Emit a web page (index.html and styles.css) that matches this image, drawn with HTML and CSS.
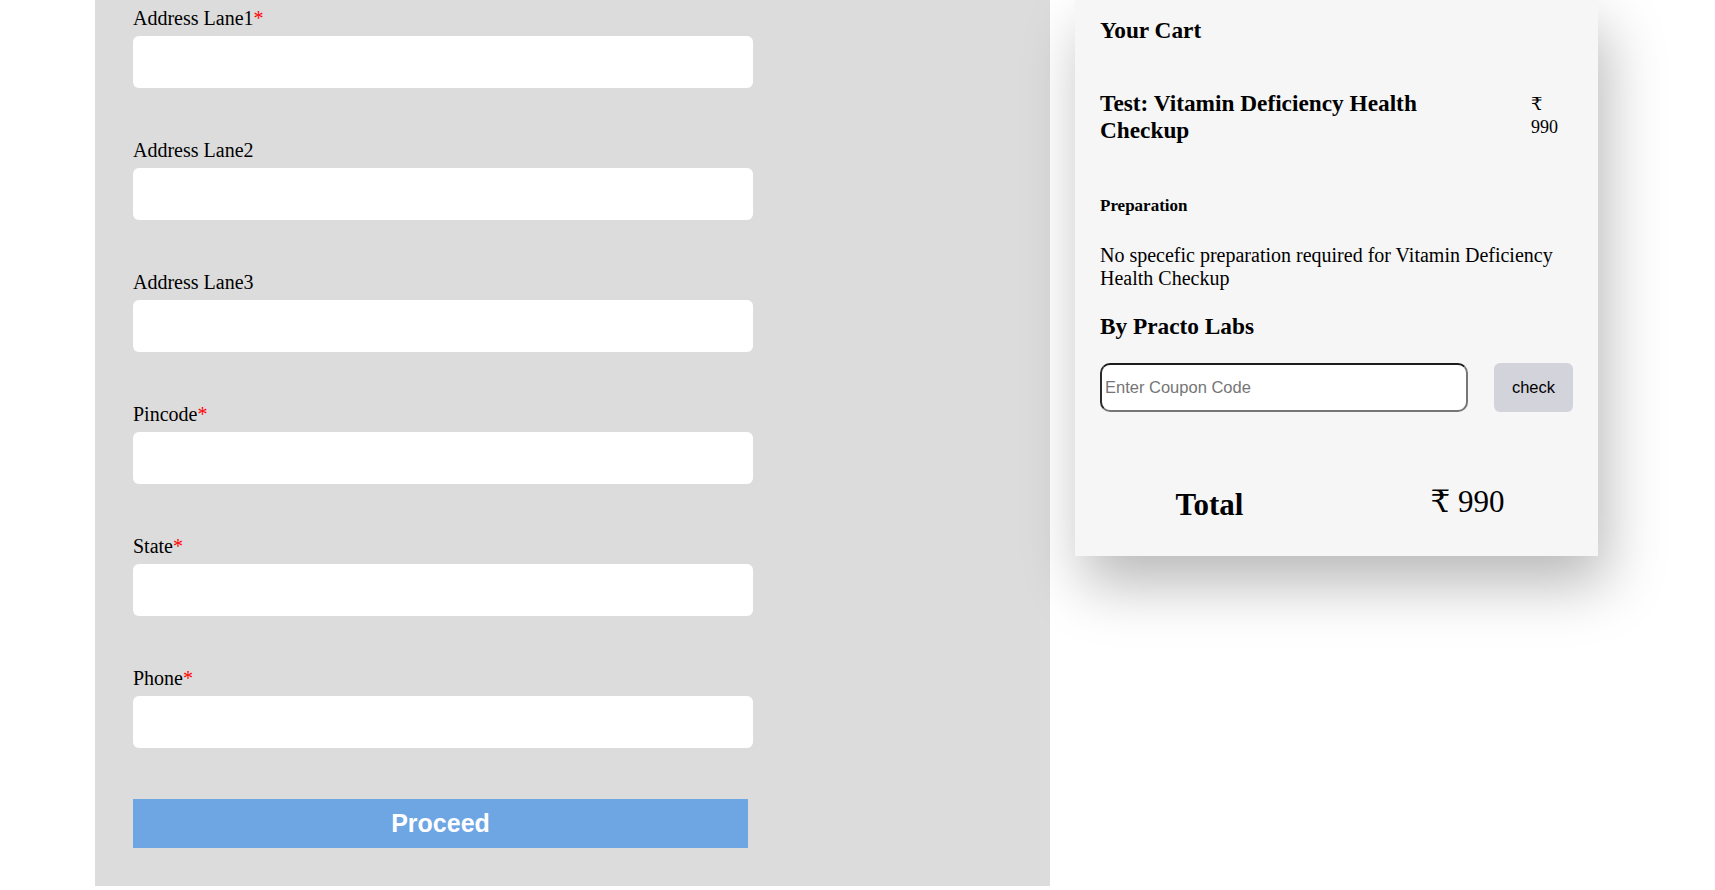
FILE: index.html
```html
<!DOCTYPE html>
<html lang="en">
<head>
<meta charset="utf-8">
<title>Checkout</title>
<link rel="stylesheet" href="styles.css">
</head>
<body>
<div class="page">
  <form class="address-panel">
    <div class="field">
      <label class="field-label">Address Lane1<span class="req">*</span></label>
      <input class="field-input" type="text">
    </div>
    <div class="field">
      <label class="field-label">Address Lane2</label>
      <input class="field-input" type="text">
    </div>
    <div class="field">
      <label class="field-label">Address Lane3</label>
      <input class="field-input" type="text">
    </div>
    <div class="field">
      <label class="field-label">Pincode<span class="req">*</span></label>
      <input class="field-input" type="text">
    </div>
    <div class="field">
      <label class="field-label">State<span class="req">*</span></label>
      <input class="field-input" type="text">
    </div>
    <div class="field">
      <label class="field-label">Phone<span class="req">*</span></label>
      <input class="field-input" type="text">
    </div>
    <button class="proceed-btn" type="button">Proceed</button>
  </form>

  <aside class="cart">
    <h3 class="cart-title">Your Cart</h3>
    <div class="cart-item">
      <h3 class="item-name">Test: Vitamin Deficiency Health Checkup</h3>
      <div class="item-price">₹ 990</div>
    </div>
    <h4 class="prep-title">Preparation</h4>
    <p class="prep-text">No specefic preparation required for Vitamin Deficiency Health Checkup</p>
    <h3 class="lab-name">By Practo Labs</h3>
    <div class="coupon-row">
      <input class="coupon-input" type="text" placeholder="Enter Coupon Code">
      <button class="coupon-btn" type="button">check</button>
    </div>
    <div class="total-row">
      <h2 class="total-label">Total</h2>
      <div class="total-price">₹ 990</div>
    </div>
  </aside>
</div>
</body>
</html>
```

FILE: styles.css
```css
html, body {
  margin: 0;
  padding: 0;
  background: #ffffff;
}

body {
  font-family: "Liberation Serif", "DejaVu Serif", serif;
  color: #000;
}

.page {
  display: flex;
  align-items: flex-start;
  gap: 25px;
  padding-left: 95px;
}

/* ---------- Address form ---------- */
.address-panel {
  width: 955px;
  box-sizing: border-box;
  background: #dcdcdc;
  padding: 7px 0 38px 38px;
  display: flex;
  flex-direction: column;
  gap: 51px;
  margin: 0;
}

.field {
  display: flex;
  flex-direction: column;
  gap: 6px;
}

.field-label {
  font-size: 20px;
  line-height: 23px;
}

.req {
  color: #ff0000;
}

.field-input {
  width: 620px;
  height: 52px;
  box-sizing: border-box;
  border: none;
  border-radius: 6px;
  background: #ffffff;
  margin: 0;
  padding: 0 10px;
  font-size: 16px;
}

.proceed-btn {
  width: 615px;
  height: 49px;
  border: none;
  background: #6ea5e3;
  color: #ffffff;
  font-family: "Liberation Sans", Arial, sans-serif;
  font-weight: bold;
  font-size: 25px;
  padding: 0;
  margin: 0;
}

/* ---------- Cart ---------- */
.cart {
  width: 523px;
  box-sizing: border-box;
  background: #f6f6f6;
  padding: 17px 25px 33px;
  box-shadow: 8px 28px 55px rgba(0, 0, 0, 0.28);
}

.cart-title {
  margin: 0;
  font-size: 23.3px;
  line-height: 26px;
  font-weight: bold;
}

.cart-item {
  display: flex;
  align-items: flex-start;
  margin-top: 47px;
}

.item-name {
  flex: 0 0 331px;
  margin: 0;
  font-size: 23.3px;
  line-height: 26.5px;
  font-weight: bold;
}

.item-price {
  width: 36px;
  margin-left: 100px;
  margin-top: 3px;
  font-size: 18px;
  line-height: 23px;
}

.prep-title {
  margin: 53px 0 0;
  font-size: 17px;
  line-height: 20px;
  font-weight: bold;
}

.prep-text {
  margin: 28px 0 0;
  font-size: 20px;
  line-height: 23px;
}

.lab-name {
  margin: 23px 0 0;
  font-size: 23.3px;
  line-height: 26px;
  font-weight: bold;
}

.coupon-row {
  display: flex;
  align-items: center;
  gap: 26px;
  margin-top: 24px;
}

.coupon-input {
  width: 368px;
  height: 49px;
  box-sizing: border-box;
  border: 2px solid;
  border-color: #1c1c1c #767676 #767676 #2a2a2a;
  border-radius: 10px;
  background: #ffffff;
  padding: 0 3px;
  margin: 0;
  font-family: "Liberation Sans", Arial, sans-serif;
  font-size: 16.5px;
}

.coupon-input::placeholder {
  color: #757575;
}

.coupon-btn {
  width: 79px;
  height: 49px;
  border: none;
  border-radius: 6px;
  background: #d3d3db;
  color: #000;
  font-family: "Liberation Sans", Arial, sans-serif;
  font-size: 16.5px;
  padding: 0;
  margin: 0;
}

.total-row {
  display: flex;
  justify-content: space-around;
  align-items: flex-start;
  margin: 72px -25px 0;
  padding-left: 7px;
}

.total-label {
  margin: 0;
  padding-top: 3px;
  font-size: 31px;
  line-height: 36px;
  font-weight: bold;
}

.total-price {
  font-size: 31px;
  line-height: 36px;
}
```
